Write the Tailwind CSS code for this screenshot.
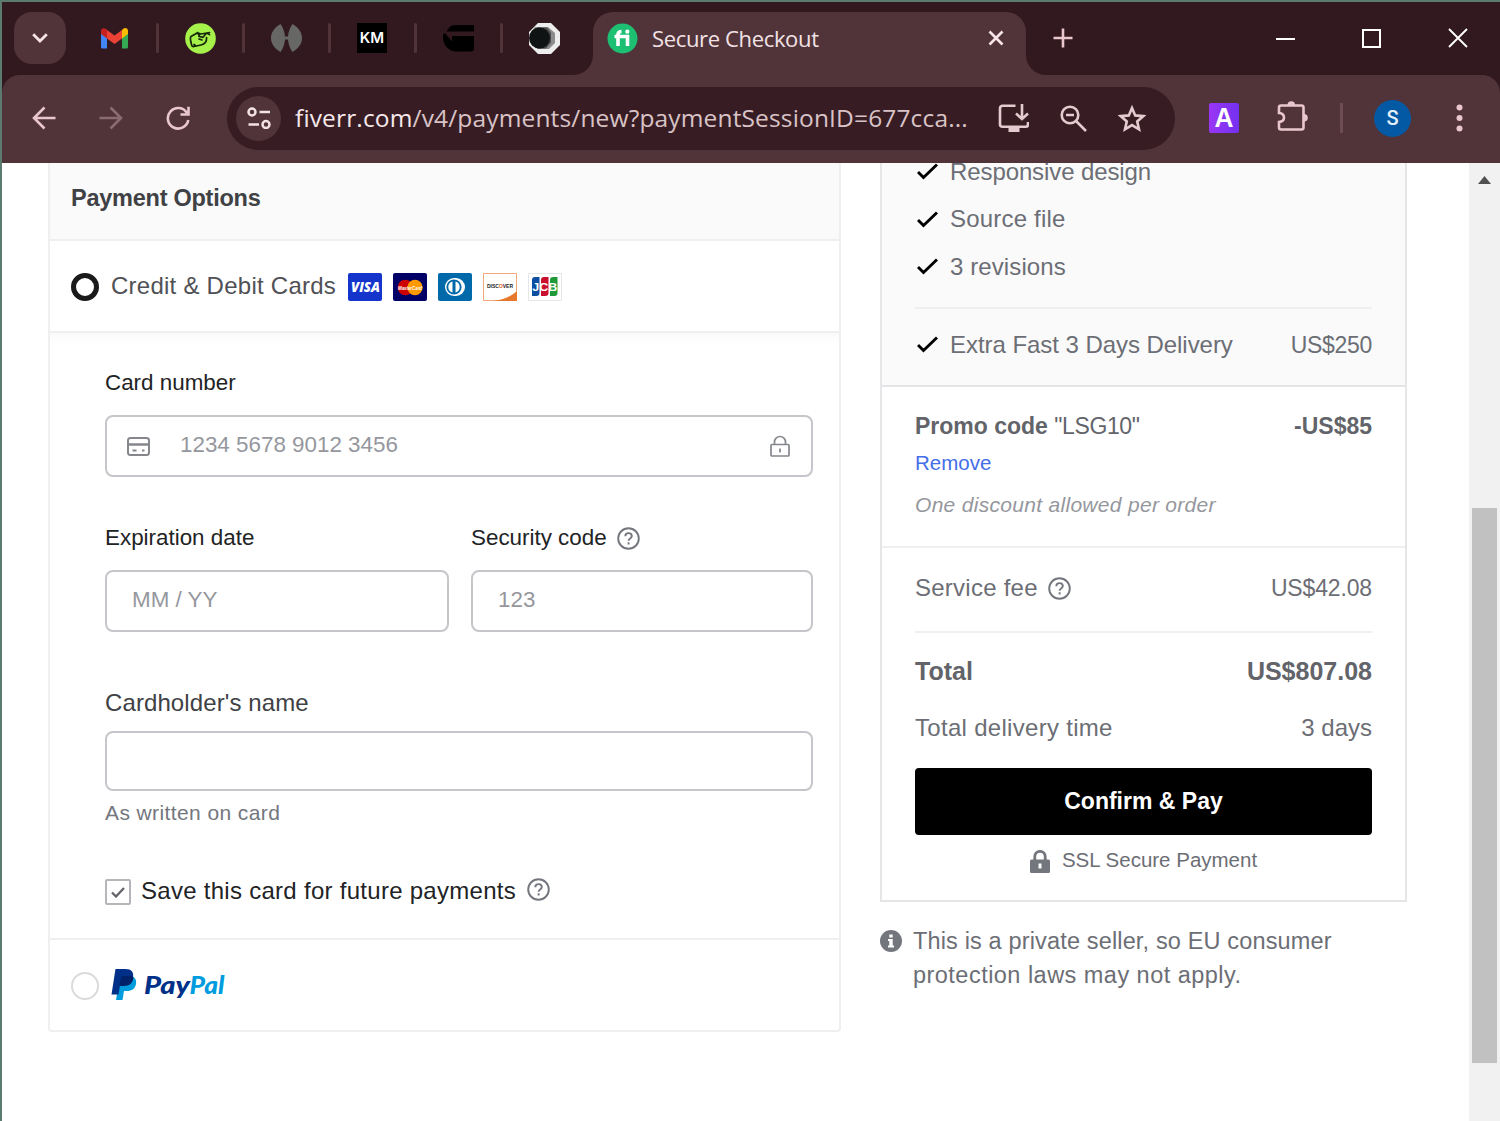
<!DOCTYPE html>
<html lang="en">
    <head>
        <meta charset="UTF-8" />
        <meta name="viewport" content="width=device-width, initial-scale=1.0" />
        <title>Secure Checkout</title>
        <script src="https://cdn.jsdelivr.net/npm/@tailwindcss/browser@4"></script>
    </head>
    <body
        class="h-screen overflow-hidden flex flex-col bg-white border-t-2 border-l-2 border-[#5b7b70] font-['Liberation_Sans',Arial,sans-serif] text-[24px] leading-[30px] text-[#6c6e75]"
    >
        <!-- Tab strip -->
        <header class="h-[73px] shrink-0 bg-[#31191f] flex pt-[10px] font-['Open_Sans',sans-serif]">
            <button class="ml-3 mr-[5px] size-[52px] shrink-0 rounded-[18px] bg-[#51343a] flex items-center justify-center">
                <svg class="w-4 h-[10px]" viewBox="0 0 16 10" fill="none" stroke="#f6e4e8" stroke-width="2.8"><path d="M1.2 1.2 8 8l6.800-6.800" /></svg>
            </button>
            <div class="w-[86px] h-[52px] flex items-center justify-center relative">
                <svg class="w-[27px] h-[21px]" viewBox="0 0 27 21">
                    <path fill="#4285f4" d="M0 3v16a1.500 1.500 0 0 0 1.500 1.500H6V8z" />
                    <path fill="#34a853" d="M21 8v12.500h4.500A1.500 1.500 0 0 0 27 19V3z" />
                    <path fill="#fbbc04" d="M21 2v8.500l6-4.500V3c0-3-3-3.800-5-2z" />
                    <path fill="#ea4335" d="M6 10.500V2l7.500 5.500L21 2v8.500l-7.500 5.600z" />
                    <path fill="#c5221f" d="M0 3v3l6 4.500V2L5 1C3-.6 0 .2 0 3z" />
                </svg>
                <span class="absolute right-[-2px] w-[3px] h-[30px] rounded bg-[#51343a]"></span>
            </div>
            <div class="w-[86px] h-[52px] flex items-center justify-center relative">
                <svg class="size-[31px]" viewBox="0 0 31 31">
                    <circle cx="15.500" cy="15.500" r="15.300" fill="#a6f24b" />
                    <path d="M24.500 9.500 16 11l-3.500-1.300L6 13.500c-1 .8-.8 2-.4 4l1 4.500c.3 1.200 1 1.700 2.400 1.500l7-1.500c3.500-.8 5.800-3.500 5.600-7.500M12.500 9.700l2 3.300M14 13.500l4 .8 3.500-4.300 3 1.500M9 21.500l2 1.500M17 17l-3-1" fill="none" stroke="#16260a" stroke-width="1.700" stroke-linejoin="round" stroke-linecap="round" />
                </svg>
                <span class="absolute right-[-2px] w-[3px] h-[30px] rounded bg-[#51343a]"></span>
            </div>
            <div class="w-[86px] h-[52px] flex items-center justify-center relative">
                <svg class="w-[31px] h-[28px]" viewBox="0 0 31 28" fill="#676865">
                    <path d="M9.500 0C3 4 0 8.500 0 14s3 10 9.500 14C12 24.500 13.700 20 14 15.500h3c.3 4.500 2 9 4.500 12.500C28 24 31 19.500 31 14S28 4 21.500 0C19 3.500 17.300 8 17 12.500h-3C13.700 8 12 3.500 9.500 0z" />
                </svg>
                <span class="absolute right-[-2px] w-[3px] h-[30px] rounded bg-[#51343a]"></span>
            </div>
            <div class="w-[86px] h-[52px] flex items-center justify-center relative">
                <span class="size-[30px] bg-black text-white text-[15px] leading-[30px] font-semibold text-center font-[Inter,sans-serif]">KM</span>
                <span class="absolute right-[-2px] w-[3px] h-[30px] rounded bg-[#51343a]"></span>
            </div>
            <div class="w-[86px] h-[52px] flex items-center justify-center relative">
                <svg class="w-[31px] h-[27px]" viewBox="0 0 31 27">
                    <path d="M7 1.500Q9 0 13 0h18v6.500H3.500zM0 9.500l2-1.500 7 8.500V11H31v12.500q0 3-3 3H13C5 26.500-1 19 0 9.500z" />
                </svg>
                <span class="absolute right-[-2px] w-[3px] h-[30px] rounded bg-[#51343a]"></span>
            </div>
            <div class="w-[86px] h-[52px] flex items-center justify-center">
                <svg class="size-[31px]" viewBox="0 0 31 31">
                    <path fill="#ededed" d="M9 0h13l9 9v13l-9 9H9l-9-9V9z" />
                    <path fill="#8c8c8c" d="M6 4h13l7 6v10l-6 6H9l-7-6V9z" />
                    <path fill="#4c4c4c" d="M8 4.500h10l4 5v10l-5 6H8z" />
                    <circle cx="10.500" cy="15" r="10.500" fill="#101314" />
                </svg>
            </div>

            <!-- Active tab -->
            <div class="ml-[6px] w-[433px] h-[63px] relative rounded-t-[20px] bg-[#51343a] flex pl-[14px] pr-[22px]">
                <svg class="absolute bottom-0 -left-5 size-5" viewBox="0 0 20 20"><path fill="#51343a" d="M20 0v20H0A20 20 0 0 0 20 0z" /></svg>
                <svg class="absolute bottom-0 -right-5 size-5" viewBox="0 0 20 20"><path fill="#51343a" d="M0 0v20h20A20 20 0 0 1 0 0z" /></svg>
                <div class="h-[52px] w-full flex items-center">
                    <svg class="size-[31px]" viewBox="0 0 31 31">
                        <circle cx="15.500" cy="15.500" r="15" fill="#1dbf73" />
                        <path d="M11 23V11.500Q11 8.500 14.500 8.500M7.500 13.500H20.500V23" fill="none" stroke="#fff" stroke-width="3.600" />
                        <circle cx="20.300" cy="8.700" r="2.100" fill="#fff" />
                    </svg>
                    <span class="ml-[14px] text-[22px] tracking-[-0.350px] text-[#f3e2e5]">Secure Checkout</span>
                    <svg class="ml-auto size-4" viewBox="0 0 16 16" fill="none" stroke="#f6e4e8" stroke-width="2.600"><path d="m1.500 1.500 13 13m0-13-13 13" /></svg>
                </div>
            </div>
            <div class="h-[52px] flex-1 flex items-center pl-[27px] pr-[32px]">
                <svg class="size-5" viewBox="0 0 20 20" stroke="#eac7ce" stroke-width="2.600"><path d="M10 .5v19M.5 10h19" /></svg>
                <div class="ml-auto flex items-center gap-[67px]">
                    <svg class="size-[19px]" viewBox="0 0 19 19" stroke="#fff" stroke-width="2"><path d="M0 10h19" /></svg>
                    <svg class="size-[19px]" viewBox="0 0 19 19" fill="none" stroke="#fff" stroke-width="2"><path d="M1 1h17v17H1z" /></svg>
                    <svg class="size-[20px]" viewBox="0 0 20 20" stroke="#fff" stroke-width="1.900"><path d="m1 1 18 18m0-18L1 19" /></svg>
                </div>
            </div>
        </header>

        <!-- Toolbar -->
        <div class="h-[88px] shrink-0 bg-[#31191f] font-['Open_Sans',sans-serif]">
            <div class="h-full bg-[#51343a] rounded-t-[18px] flex items-center pl-[30px] pr-[37px] pb-[2px]">
                <svg class="size-6" viewBox="0 0 24 24" fill="none" stroke="#eac7ce" stroke-width="2.600"><path d="M23.500 12H2.500M12.500 1.500 2 12l10.500 10.500" /></svg>
                <svg class="ml-[43px] size-6" viewBox="0 0 24 24" fill="none" stroke="#8b6b71" stroke-width="2.600"><path d="M.5 12h21M11.500 1.500 22 12 11.500 22.500" /></svg>
                <svg class="ml-[43px] size-6" viewBox="0 0 24 24" fill="none" stroke="#eac7ce" stroke-width="2.600"><path d="M21 7A10.300 10.300 0 1 0 22.300 14M22.500.8v7.700h-8" /></svg>
                <div class="ml-[37px] w-[948px] h-[63px] rounded-full bg-[#371d23] flex items-center pl-[9px] pr-[29px]">
                    <span class="size-[45px] shrink-0 rounded-full bg-[#51343a] flex items-center justify-center">
                        <svg class="w-6 h-[22px]" viewBox="0 0 24 22" fill="none" stroke="#f3e2e5" stroke-width="2.500"><circle cx="5" cy="5" r="3.500" /><path d="M12.500 5H23M1.500 17.500H12" /><circle cx="19" cy="17.500" r="3.500" /></svg>
                    </span>
                    <span class="ml-[14px] w-[690px] shrink-0 whitespace-nowrap text-[24.500px] tracking-[0.150px] text-[#d9c3c7]"><span class="text-[#f6e8ea]">fiverr.com</span>/v4/payments/new?paymentSessionID=677cca...</span>
                    <div class="ml-auto flex items-center gap-[31px] shrink-0">
                        <svg class="w-[31px] h-[28px]" viewBox="0 0 31 28" fill="none" stroke="#e3cbd0" stroke-width="2.600"><path d="M17.500 1.800H4.500a2.500 2.500 0 0 0-2.500 2.500v16a2.500 2.500 0 0 0 2.500 2.500h23a2.500 2.500 0 0 0 2.500-2.500V18" /><path d="M10.500 25.500h11" stroke-width="5" /><path d="M24 0v14M18 9.500l6 5.500 6-5.500" /></svg>
                        <svg class="size-[27px]" viewBox="0 0 27 27" fill="none" stroke="#e3cbd0" stroke-width="2.600"><circle cx="10" cy="10" r="8.300" /><path d="m16 16 10 10M6 10h8" /></svg>
                        <svg class="w-[28px] h-[27px]" viewBox="0 0 28 27" fill="none" stroke="#e3cbd0" stroke-width="2.600"><path d="m14 3 3.200 7.400 8.100.7-6.100 5.300 1.800 7.900-7-4.200-7 4.200 1.800-7.900-6.100-5.300 8.100-.7z" /></svg>
                    </div>
                </div>
                <span class="ml-[34px] size-[30px] rounded-[2px] bg-linear-to-r from-[#9a35f5] to-[#7430f0] text-white text-[26px] leading-[30px] font-semibold text-center font-[Inter,sans-serif]">A</span>
                <svg class="ml-[38px] w-[31px] h-[31px] mb-[3px]" viewBox="0 0 31 31" fill="none" stroke="#eac7ce" stroke-width="2.600"><path d="M4 4.500h20.500q2 0 2 2v20q0 2-2 2H4q-2 0-2-2v-5.500q5-.5 5-4.500t-5-4.500V6.500q0-2 2-2z" /><path d="M10.500 4a3.800 3.800 0 0 1 7.600 0zM27 13a3.800 3.800 0 0 1 0 7.600z" fill="#eac7ce" stroke="none" /></svg>
                <span class="ml-[32px] w-[3px] h-[30px] bg-[#6d4c53]"></span>
                <span class="ml-[31px] size-[37px] rounded-full bg-[#0359a3] text-[#e3effb] text-[20px] leading-[37px] text-center font-medium font-[Roboto,sans-serif]">S</span>
                <svg class="ml-auto w-[7px] h-[28px]" viewBox="0 0 7 28" fill="#eac7ce"><circle cx="3.500" cy="3.500" r="3" /><circle cx="3.500" cy="14" r="3" /><circle cx="3.500" cy="24.500" r="3" /></svg>
            </div>
        </div>

        <main class="flex-1 min-h-0 overflow-hidden flex items-start pl-[46px]">
            <!-- Payment options -->
            <section class="w-[793px] shrink-0 border-2 border-t-0 border-[#efefef] rounded-b">
                <h2 class="h-[78px] pb-[6px] pl-[21px] flex items-center bg-[#fafafa] border-b-2 border-[#efefef] text-[23.5px] tracking-[-0.25px] font-bold text-[#404145]">Payment Options</h2>
                <div class="h-[92px] pl-[21px] flex items-center border-b-2 border-[#efefef]">
                    <span class="size-[28px] mt-[2px] rounded-full border-[5px] border-[#1a1a1a]"></span>
                    <span class="ml-[12px] w-[237px] whitespace-nowrap tracking-[0.25px] text-[#505156]">Credit &amp; Debit Cards</span>
                    <div class="flex gap-[11px] pt-[2px]">
                        <svg class="w-[34px] h-[28px]" viewBox="0 0 34 28"><rect width="34" height="28" rx="2" fill="#1434cb" /><text x="17.500" y="18.500" text-anchor="middle" textLength="29" lengthAdjust="spacingAndGlyphs" font-family="Open Sans" font-style="italic" font-weight="800" font-size="14.500" fill="#fff">VISA</text></svg>
                        <svg class="w-[34px] h-[28px]" viewBox="0 0 34 28"><rect width="34" height="28" rx="2" fill="#000066" /><circle cx="12.300" cy="14.500" r="7.700" fill="#cc0000" /><circle cx="22" cy="14.500" r="7.700" fill="#ff9900" /><text x="17" y="17" text-anchor="middle" textLength="24" lengthAdjust="spacingAndGlyphs" font-family="Liberation Sans" font-style="italic" font-weight="700" font-size="5.500" fill="#fff">MasterCard</text></svg>
                        <svg class="w-[34px] h-[28px]" viewBox="0 0 34 28"><rect width="34" height="28" rx="2" fill="#0069aa" /><path d="M16 5h2a9 9 0 0 1 0 18h-2a9 9 0 0 1 0-18z" fill="#fff" /><circle cx="16" cy="14" r="7.600" fill="#0069aa" /><path d="M14.500 8.500a5.700 5.700 0 0 0 0 11zM17.500 8.500a5.700 5.700 0 0 1 0 11z" fill="#fff" /></svg>
                        <svg class="w-[34px] h-[28px]" viewBox="0 0 34 28"><path d="M.5.5h33v27H.5z" fill="#fff" stroke="#f0a87a" /><path d="M10 28C20 27 28 23.500 34 18v10z" fill="#e7772b" /><text x="17" y="15" text-anchor="middle" textLength="26" lengthAdjust="spacingAndGlyphs" font-family="Liberation Sans" font-weight="700" font-size="5" fill="#222">DISC<tspan fill="#e7661b">O</tspan>VER</text></svg>
                        <svg class="w-[34px] h-[28px]" viewBox="0 0 34 28"><path d="M.5.5h33v27H.5z" fill="#fff" stroke="#e6e6e6" /><path d="M7 4h4.500v16q0 3-3 3H4V7q0-3 3-3z" fill="#0b4ea2" /><path d="M16 4h4.500v16q0 3-3 3H13V7q0-3 3-3z" fill="#c8102e" /><path d="M25 4h4.500v16q0 3-3 3H22V7q0-3 3-3z" fill="#1f9a38" /><text x="16.800" y="17.500" text-anchor="middle" textLength="25" lengthAdjust="spacingAndGlyphs" font-family="Liberation Sans" font-weight="700" font-size="10" fill="#fff">JCB</text></svg>
                    </div>
                </div>
                <form class="h-[607px] pl-[55px] pr-[26px] pt-[35px] border-b-2 border-[#efefef] bg-linear-to-b from-[#fafafa] to-white to-[12px] text-[#222325]">
                    <label class="block h-[30px] text-[22.4px]">Card number</label>
                    <div class="mt-[17px] h-[62px] rounded-lg border-2 border-[#c5c6c9] bg-white flex items-center pl-[20px] pr-[21px] pb-[3px] text-[22.4px] text-[#95979d]">
                        <svg class="mt-[3px] w-[23px] h-[19px]" viewBox="0 0 23 19" fill="none" stroke="#85878d" stroke-width="2"><rect x="1" y="1" width="21" height="17" rx="2.500" /><path d="M1 7.500h21" stroke-width="2.500" /><path d="M5.500 13.500h4M15 13.500h2.500" /></svg>
                        <span class="ml-[30px]">1234 5678 9012 3456</span>
                        <svg class="ml-auto mt-[3px] w-[20px] h-[22px]" viewBox="0 0 20 22" fill="none" stroke="#85878d" stroke-width="1.700"><rect x="1" y="9.500" width="18" height="11.500" rx="1" /><path d="M4.500 9.500V7a5.500 5.500 0 0 1 11 0v2.500M10 13.500v4" /></svg>
                    </div>
                    <div class="mt-[46px] flex gap-[22px]">
                        <div class="w-[344px]">
                            <label class="block h-[30px] text-[22.4px]">Expiration date</label>
                            <div class="mt-[17px] h-[62px] rounded-lg border-2 border-[#c5c6c9] bg-white flex items-center pl-[25px] pb-[3px] text-[22.4px] text-[#95979d]">MM / YY</div>
                        </div>
                        <div class="flex-1">
                            <label class="h-[30px] flex items-center gap-[10px] text-[22.4px]">Security code
                                <svg class="size-[23px]" viewBox="0 0 23 23" fill="none" stroke="#74767e" stroke-width="1.900"><circle cx="11.500" cy="11.500" r="10.300" /><path d="M8.300 9.300c0-4.300 6.500-4 6.500-.3 0 2.500-3.200 2.300-3.200 4.700M11.600 15.300v2.200" /></svg>
                            </label>
                            <div class="mt-[17px] h-[62px] rounded-lg border-2 border-[#c5c6c9] bg-white flex items-center pl-[25px] pb-[3px] text-[22.4px] text-[#95979d]">123</div>
                        </div>
                    </div>
                    <label class="mt-[56px] block h-[30px] tracking-[0.1px] text-[#404145]">Cardholder's name</label>
                    <div class="mt-[13px] h-[60px] rounded-lg border-2 border-[#c5c6c9] bg-white"></div>
                    <p class="mt-[7px] h-[30px] text-[21px] tracking-[0.4px] text-[#74767e]">As written on card</p>
                    <div class="mt-[48px] h-[30px] flex items-center">
                        <span class="mt-[2px] size-[26px] border-2 border-[#b5b6ba] rounded-[2px] bg-white flex items-center justify-center">
                            <svg class="w-[14px] h-[11px]" viewBox="0 0 14 11" fill="none" stroke="#62646a" stroke-width="2.300"><path d="m1 5.500 4 4L13 1" /></svg>
                        </span>
                        <span class="ml-[10px] tracking-[0.280px]">Save this card for future payments</span>
                        <svg class="ml-[11px] mb-[3px] size-[23px]" viewBox="0 0 23 23" fill="none" stroke="#74767e" stroke-width="1.900"><circle cx="11.500" cy="11.500" r="10.300" /><path d="M8.300 9.300c0-4.300 6.500-4 6.500-.3 0 2.500-3.200 2.300-3.200 4.700M11.600 15.300v2.200" /></svg>
                    </div>
                </form>
                <div class="h-[90px] pl-[21px] flex items-center">
                    <span class="size-[28px] mt-[2px] rounded-full border-2 border-[#dadbdd]"></span>
                    <svg class="ml-[12px] w-[116px] h-[34px]" viewBox="0 0 116 34">
                        <path fill="#009cde" d="M10 9h12c3 1.500 3.500 4 3 7-1 5-4.500 7-9 7h-3l-1.500 9H5l2-12z" />
                        <path fill="#003087" d="M4.500 1h10c6 0 8.500 3 7.500 8.500-1 5.500-4.500 8-10 8H9L7.500 26.500H.5z" />
                        <path fill="#012169" d="M10 9.500q.5-1.500 2-1.500h8q2 0 2.500 1-.5 9-10 9H8.500z" />
                        <text x="33" y="25.500" textLength="46" lengthAdjust="spacingAndGlyphs" font-family="Lato" font-style="italic" font-weight="900" font-size="24" fill="#003087">Pay</text>
                        <text x="78.500" y="25.500" textLength="35" lengthAdjust="spacingAndGlyphs" font-family="Lato" font-style="italic" font-weight="900" font-size="24" fill="#009cde">Pal</text>
                    </svg>
                </div>
            </section>

            <!-- Order summary -->
            <aside class="ml-[39px] w-[528px] shrink-0">
                <div class="w-[527px] border-2 border-t-0 border-[#e6e6e8]">
                    <div class="h-[224px] px-[33px] bg-[#fafafa] border-b-2 border-[#e4e5e7] flex flex-col">
                        <ul class="-mt-[15px] mb-[16px]">
                            <li class="h-[47.500px] flex items-center gap-[12px] tracking-[-0.1px]"><svg class="ml-[2px] w-[21px] h-[17px]" viewBox="0 0 21 17" fill="none" stroke="#000" stroke-width="2.900"><path d="m1 9 5.500 5.500L20 1.500" /></svg>Responsive design</li>
                            <li class="h-[47.500px] flex items-center gap-[12px] tracking-[0.2px]"><svg class="ml-[2px] w-[21px] h-[17px]" viewBox="0 0 21 17" fill="none" stroke="#000" stroke-width="2.900"><path d="m1 9 5.500 5.500L20 1.500" /></svg>Source file</li>
                            <li class="h-[47.500px] flex items-center gap-[12px] tracking-[0.1px]"><svg class="ml-[2px] w-[21px] h-[17px]" viewBox="0 0 21 17" fill="none" stroke="#000" stroke-width="2.900"><path d="m1 9 5.500 5.500L20 1.500" /></svg>3 revisions</li>
                        </ul>
                        <div class="border-t-2 border-[#efeff0] pt-[21px] flex items-center">
                            <svg class="ml-[2px] mr-[12px] w-[21px] h-[17px]" viewBox="0 0 21 17" fill="none" stroke="#000" stroke-width="2.900"><path d="m1 9 5.500 5.500L20 1.500" /></svg>
                            <span class="tracking-[-0.05px]">Extra Fast 3 Days Delivery</span>
                            <span class="ml-auto text-[23px] tracking-[-0.3px]">US$250</span>
                        </div>
                    </div>
                    <div class="h-[161px] px-[33px] pt-[24px] border-b-2 border-[#efeff0]">
                        <div class="flex justify-between text-[23px] text-[#62646a]">
                            <span><b>Promo code</b> <span class="tracking-[-0.4px]">"LSG10"</span></span>
                            <b>-US$85</b>
                        </div>
                        <p class="mt-[7px] text-[20.500px] text-[#446ee7]">Remove</p>
                        <p class="mt-[12px] text-[21px] tracking-[0.3px] italic text-[#95979d]">One discount allowed per order</p>
                    </div>
                    <div class="px-[33px] pt-[25px]">
                        <div class="flex items-center pb-[28px] border-b-2 border-[#efeff0]">
                            <span class="tracking-[0.25px]">Service fee</span>
                            <svg class="ml-[10px] size-[23px]" viewBox="0 0 23 23" fill="none" stroke="#74767e" stroke-width="1.900"><circle cx="11.500" cy="11.500" r="10.300" /><path d="M8.300 9.300c0-4.300 6.500-4 6.500-.3 0 2.500-3.200 2.300-3.200 4.700M11.600 15.300v2.200" /></svg>
                            <span class="ml-auto text-[23px] tracking-[-0.150px]">US$42.08</span>
                        </div>
                        <div class="mt-[23px] flex justify-between text-[25px] font-bold text-[#62646a]">
                            <span>Total</span>
                            <span>US$807.08</span>
                        </div>
                        <div class="mt-[27px] flex justify-between">
                            <span class="tracking-[0.3px]">Total delivery time</span>
                            <span>3 days</span>
                        </div>
                        <button class="mt-[25px] w-full h-[67px] rounded bg-black text-white text-[23px] font-bold pb-[2px]">Confirm &amp; Pay</button>
                        <div class="mt-[10px] mb-[25px] flex items-center justify-center text-[20.500px]">
                            <svg class="mr-[12px] mt-[3px] w-[20px] h-[23px]" viewBox="0 0 20 23"><path d="M4.800 10V6.500a5.200 5.200 0 0 1 10.400 0V10" fill="none" stroke="#74767e" stroke-width="2.800" /><rect y="9.500" width="20" height="13.500" rx="1.500" fill="#74767e" /><path d="M8.500 13.500h3v5h-3z" fill="#fff" /></svg>
                            SSL Secure Payment
                        </div>
                    </div>
                </div>
                <div class="mt-[22px] flex">
                    <svg class="mt-[6px] size-[22px] shrink-0" viewBox="0 0 22 22"><circle cx="11" cy="11" r="11" fill="#74767e" /><path d="M9.300 4.500h3.400v3H9.300zM8 9h4.700v6.500H14v2H8v-2h1.300V11H8z" fill="#fff" /></svg>
                    <p class="ml-[11px] leading-[34px] text-[23.500px] whitespace-nowrap">
                        <span class="tracking-[0.150px]">This is a private seller, so EU consumer</span><br />
                        <span class="tracking-[0.470px]">protection laws may not apply.</span>
                    </p>
                </div>
            </aside>

            <!-- Scrollbar -->
            <div class="ml-auto w-[31px] h-full bg-[#f1f1f1] flex flex-col items-center pt-[13px]">
                <svg class="w-[13px] h-[8px]" viewBox="0 0 13 8"><path d="M6.500 0 13 8H0z" fill="#505050" /></svg>
                <div class="mt-[324px] w-[25px] h-[555px] bg-[#c1c1c1]"></div>
            </div>
        </main>
    </body>
</html>
